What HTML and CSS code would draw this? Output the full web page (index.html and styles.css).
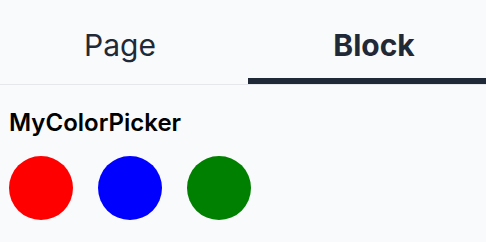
FILE: index.html
```html
<!DOCTYPE html>
<html lang="en">
<head>
    <meta charset="UTF-8">
    <meta name="viewport" content="width=device-width, initial-scale=1.0">
    <title>Color picker</title>
    <link rel="stylesheet" href="styles.css">
</head>
<body>

<div class="panel">
    <div class="tabs">
        <div class="tab tab-page">Page</div>
        <div class="tab tab-block active">Block</div>
    </div>

    <div class="section">
        <h2 class="block-title">MyColorPicker</h2>
        <div class="swatches">
            <div class="swatch red"></div>
            <div class="swatch blue"></div>
            <div class="swatch green"></div>
        </div>
    </div>
</div>

</body>
</html>
```

FILE: styles.css
```css
body {
    margin: 0;
    padding: 0;
    font-family: Inter, "Noto Sans", sans-serif;
    background-color: #f9fafb;
}
.panel {
    width: 486px;
    height: 242px;
    background-color: #f9fafb;
}
.tabs {
    display: flex;
    height: 84px;
    border-bottom: 1px solid #e5e7eb;
}
.tab {
    display: flex;
    align-items: center;
    justify-content: center;
    box-sizing: border-box;
    font-size: 30px;
    color: #1f2937;
    padding-top: 6px;
    cursor: pointer;
}
.tab-page {
    width: 248px;
    padding-right: 8px;
}
.tab-block {
    flex: 1;
    padding-left: 14px;
}
.active {
    font-weight: 700;
    border-bottom: 6px solid #1f2937;
    padding-top: 12px;
}
.section {
    padding: 0 9px;
}
.block-title {
    margin: 0;
    padding-top: 22px;
    font-size: 24px;
    font-weight: 600;
    color: #000;
    line-height: 32px;
}
.swatches {
    display: flex;
    gap: 25px;
    margin-top: 17px;
}
.swatch {
    width: 64px;
    height: 64px;
    border-radius: 50%;
}
.red {
    background-color: #ff0000;
}
.blue {
    background-color: #0000ff;
}
.green {
    background-color: #008000;
}
```
